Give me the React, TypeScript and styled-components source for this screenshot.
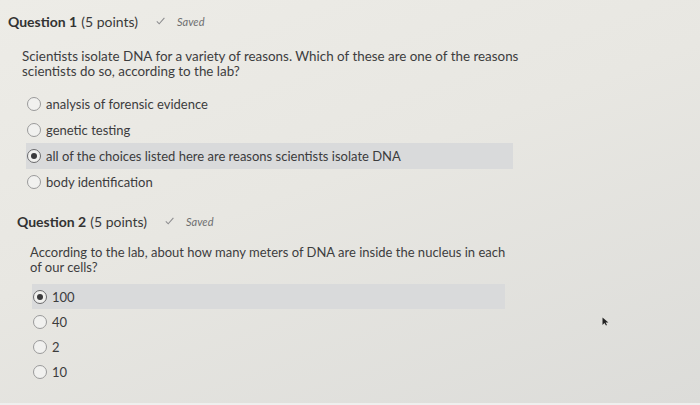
import React from "react";
import styled, { createGlobalStyle } from "styled-components";

const Global = createGlobalStyle`
  html, body { margin: 0; padding: 0; }
  body {
    width: 700px; height: 405px; overflow: hidden;
    font-family: Lato, "Open Sans", sans-serif;
    color: #3b3b3c;
  }
`;

const Page = styled.div`
  width: 700px;
  height: 405px;
  box-sizing: border-box;
  background: linear-gradient(160deg, #edece7 0%, #e8e7e2 45%, #dcdcd9 100%);
  border-bottom: 2px solid #efefee;
  display: flex;
  flex-direction: column;
`;

const Section = styled.section<{ $left: number; $top: number }>`
  padding-left: ${(p) => p.$left}px;
  margin-top: ${(p) => p.$top}px;
  display: flex;
  flex-direction: column;
`;

const Header = styled.div`
  display: flex;
  align-items: center;
  height: 24px;
  font-size: 14px;
`;

const Strong = styled.span`
  font-weight: 700;
  color: #333;
`;

const Points = styled.span`
  margin-left: 4px;
  color: #3a3a3a;
`;

const SavedWrap = styled.span<{ $gap: number }>`
  display: inline-flex;
  align-items: center;
  margin-left: ${(p) => p.$gap}px;
  font-size: 11px;
  font-style: italic;
  color: #6e6e70;
`;

const Check = styled.svg`
  width: 9px;
  height: 8px;
  margin-right: 12px;
`;

const Prompt = styled.p<{ $indent: number; $top: number; $width: number; $size: number }>`
  margin: ${(p) => p.$top}px 0 0 ${(p) => p.$indent}px;
  width: ${(p) => p.$width}px;
  font-size: ${(p) => p.$size}px;
  line-height: 15px;
  color: #3d3d3e;
`;

const Options = styled.div<{ $indent: number; $top: number }>`
  margin: ${(p) => p.$top}px 0 0 ${(p) => p.$indent}px;
  display: flex;
  flex-direction: column;
`;

const Option = styled.div<{ $selected: boolean; $h: number; $width: number }>`
  display: flex;
  align-items: center;
  height: ${(p) => p.$h}px;
  width: ${(p) => p.$width}px;
  padding-left: 1px;
  box-sizing: border-box;
  background: ${(p) => (p.$selected ? "#d9dadb" : "transparent")};
  font-size: 13px;
  color: #3c3c3d;
`;

const Radio = styled.span<{ $selected: boolean }>`
  width: 14px;
  height: 14px;
  border-radius: 50%;
  box-sizing: border-box;
  border: 1px solid ${(p) => (p.$selected ? "#6a6a6c" : "#9a9a9a")};
  background: #f1f1ef;
  display: flex;
  align-items: center;
  justify-content: center;
  margin-right: 5px;
  flex-shrink: 0;
  &::after {
    content: "";
    display: ${(p) => (p.$selected ? "block" : "none")};
    width: 6px;
    height: 6px;
    border-radius: 50%;
    background: #3a3a3c;
  }
`;

const Cursor = styled.svg`
  position: absolute;
  left: 602px;
  top: 317px;
  width: 7px;
  height: 9px;
`;

const Wrap = styled.div`
  position: relative;
`;

type Q = {
  n: number;
  prompt: string;
  options: string[];
  selected: number;
};

const q1: Q = {
  n: 1,
  prompt:
    "Scientists isolate DNA for a variety of reasons. Which of these are one of the reasons scientists do so, according to the lab?",
  options: [
    "analysis of forensic evidence",
    "genetic testing",
    "all of the choices listed here are reasons scientists isolate DNA",
    "body identification",
  ],
  selected: 2,
};

const q2: Q = {
  n: 2,
  prompt:
    "According to the lab, about how many meters of DNA are inside the nucleus in each of our cells?",
  options: ["100", "40", "2", "10"],
  selected: 0,
};

function Saved({ gap }: { gap: number }) {
  return (
    <SavedWrap $gap={gap}>
      <Check viewBox="0 0 9 8">
        <path d="M0.8 4.4 L3.2 6.8 L8.4 0.8" fill="none" stroke="#8e8e90" strokeWidth="1.1" />
      </Check>
      Saved
    </SavedWrap>
  );
}

type Layout = {
  left: number;
  top: number;
  promptIndent: number;
  promptTop: number;
  promptWidth: number;
  promptSize: number;
  optIndent: number;
  optTop: number;
  rowH: number;
  rowW: number;
  savedGap: number;
};

function Question({ q, l }: { q: Q; l: Layout }) {
  return (
    <Section $left={l.left} $top={l.top}>
      <Header>
        <Strong>Question {q.n}</Strong>
        <Points>(5 points)</Points>
        <Saved gap={l.savedGap} />
      </Header>
      <Prompt $indent={l.promptIndent} $top={l.promptTop} $width={l.promptWidth} $size={l.promptSize}>
        {q.prompt}
      </Prompt>
      <Options $indent={l.optIndent} $top={l.optTop}>
        {q.options.map((o, i) => (
          <Option key={o} $selected={i === q.selected} $h={l.rowH} $width={l.rowW}>
            <Radio $selected={i === q.selected} />
            {o}
          </Option>
        ))}
      </Options>
    </Section>
  );
}

const layout1: Layout = {
  left: 8,
  top: 9,
  promptIndent: 14,
  promptTop: 16,
  promptWidth: 520,
  promptSize: 13.4,
  optIndent: 18,
  optTop: 12,
  rowH: 26,
  rowW: 487,
  savedGap: 18,
};

const layout2: Layout = {
  left: 17,
  top: 14,
  promptIndent: 13,
  promptTop: 12,
  promptWidth: 485,
  promptSize: 13,
  optIndent: 15,
  optTop: 9,
  rowH: 25,
  rowW: 473,
  savedGap: 18,
};

export default function App() {
  return (
    <Wrap>
      <Global />
      <Page>
        <Question q={q1} l={layout1} />
        <Question q={q2} l={layout2} />
      </Page>
      <Cursor viewBox="0 0 7 9">
        <path d="M0.5 0.5 L0.5 8 L2.4 6 L4 8.6 L5 8 L3.6 5.6 L6.4 5.4 Z" fill="#222" />
      </Cursor>
    </Wrap>
  );
}
